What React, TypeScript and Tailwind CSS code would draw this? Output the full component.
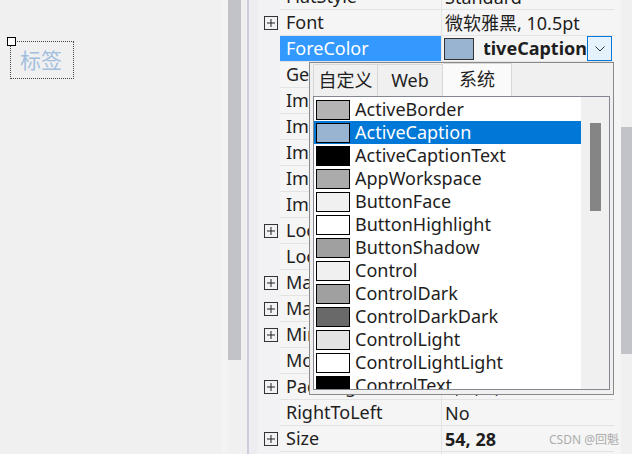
import React from "react";

type Row = { name: string; value?: string; plus?: boolean; selected?: boolean; bold?: boolean };

const rows: Row[] = [
  { name: "FlatStyle", value: "Standard" },
  { name: "Font", value: "微软雅黑, 10.5pt", plus: true },
  { name: "ForeColor", selected: true },
  { name: "GenerateMember", value: "True" },
  { name: "Image", value: "(无)" },
  { name: "ImageAlign", value: "MiddleCenter" },
  { name: "ImageIndex", value: "(无)" },
  { name: "ImageKey", value: "(无)" },
  { name: "ImageList", value: "(无)" },
  { name: "Location", value: "10, 41", plus: true },
  { name: "Locked", value: "False" },
  { name: "Margin", value: "3, 0, 3, 0", plus: true },
  { name: "MaximumSize", value: "0, 0", plus: true },
  { name: "MinimumSize", value: "0, 0", plus: true },
  { name: "Modifiers", value: "Private" },
  { name: "Padding", value: "0, 0, 0, 0", plus: true },
  { name: "RightToLeft", value: "No" },
  { name: "Size", value: "54, 28", plus: true, bold: true },
  { name: "TabIndex", value: "0" },
];

const colors: { name: string; color: string; selected?: boolean }[] = [
  { name: "ActiveBorder", color: "#b4b4b4" },
  { name: "ActiveCaption", color: "#99b4d1", selected: true },
  { name: "ActiveCaptionText", color: "#000000" },
  { name: "AppWorkspace", color: "#ababab" },
  { name: "ButtonFace", color: "#f0f0f0" },
  { name: "ButtonHighlight", color: "#ffffff" },
  { name: "ButtonShadow", color: "#a0a0a0" },
  { name: "Control", color: "#f0f0f0" },
  { name: "ControlDark", color: "#a0a0a0" },
  { name: "ControlDarkDark", color: "#696969" },
  { name: "ControlLight", color: "#e3e3e3" },
  { name: "ControlLightLight", color: "#ffffff" },
  { name: "ControlText", color: "#000000" },
];

function PlusBox() {
  return (
    <svg width="14" height="14" viewBox="0 0 14 14" className="block">
      <rect x="0.5" y="0.5" width="13" height="13" fill="none" stroke="#333" strokeWidth="1" />
      <path d="M3 7H11M7 3V11" stroke="#222" strokeWidth="1" />
    </svg>
  );
}

function Chevron() {
  return (
    <svg width="10" height="6" viewBox="0 0 10 6" className="block">
      <path d="M0.5 0.5L5 5L9.5 0.5" fill="none" stroke="#333" strokeWidth="1" />
    </svg>
  );
}

export default function App() {
  const font = { fontFamily: '"Noto Sans", "Noto Sans CJK SC", sans-serif' };
  return (
    <div
      className="flex w-[632px] h-[454px] overflow-hidden bg-[#f0f0f0] text-[18px] text-[#1e1e1e]"
      style={font}
    >
      {/* designer surface */}
      <div className="relative w-[221px] h-full bg-[#f0f0f0] shrink-0">
        <div className="absolute left-[10px] top-[41px] w-[64px] h-[38px] border border-dotted border-[#444] flex items-center pl-[9px]">
          <span className="text-[21px] leading-none text-[#a3bfdf]">标签</span>
        </div>
        <div className="absolute left-[7px] top-[37px] w-[9px] h-[9px] bg-white border border-black" />
      </div>
      <div className="w-[7px] h-full bg-[#f3f3f3] shrink-0" />
      {/* designer scrollbar */}
      <div className="w-[13px] h-full shrink-0 flex flex-col bg-[#f0f0f0]">
        <div className="h-[360px] bg-[#c2c3c9]" />
      </div>
      <div className="w-[6px] h-full bg-[#f0f0f0] shrink-0" />
      <div className="w-[2px] h-full bg-[#cdcedb] shrink-0" />
      <div className="w-[9px] h-full bg-[#eeeef2] shrink-0" />

      {/* property grid */}
      <div className="relative flex flex-1 h-full bg-[#f5f5f5]">
        <div className="w-[356px] h-full overflow-hidden shrink-0">
          <div className="flex flex-col mt-[-16px]">
            {rows.map((r) => (
              <div key={r.name} className="flex h-[26px] shrink-0">
                <div className="w-[22px] h-[26px] flex items-center pl-[6px] bg-[#f2f2f5]">
                  {r.plus && <PlusBox />}
                </div>
                <div
                  className={
                    "w-[162px] h-[26px] border-r border-b border-[#e3e3e3] pl-[6px] leading-[25px] whitespace-nowrap overflow-hidden " +
                    (r.selected ? "bg-[#3399ff] text-white" : "")
                  }
                >
                  {r.name}
                </div>
                <div className="flex-1 h-[26px] border-b border-[#e3e3e3] whitespace-nowrap overflow-hidden">
                  {r.selected ? (
                    <div className="flex h-[25px] items-center">
                      <div className="ml-[2px] w-[30px] h-[22px] bg-[#99b4d1] border border-[#333] shrink-0" />
                      <div className="ml-[10px] w-[103px] h-[25px] overflow-hidden flex justify-end shrink-0">
                        <span className="font-bold leading-[25px] whitespace-nowrap">ActiveCaption</span>
                      </div>
                      <div className="w-[25px] h-[25px] bg-[#e5f1fb] border border-[#0078d7] flex items-center justify-center shrink-0">
                        <Chevron />
                      </div>
                    </div>
                  ) : (
                    <span className={"pl-[3px] leading-[25px] " + (r.bold ? "font-bold" : "")}>{r.value}</span>
                  )}
                </div>
              </div>
            ))}
          </div>
        </div>
        <div className="w-[7px] h-full bg-[#f5f5f5] shrink-0" />
        <div className="w-[11px] h-full flex flex-col bg-[#f0f0f0] shrink-0">
          <div className="h-[127px]" />
          <div className="h-[227px] bg-[#c2c3c9]" />
        </div>

        {/* color dropdown */}
        <div className="absolute left-[51px] top-[62px] w-[305px] h-[333px] bg-[#f0f0f0] border border-[#8a8a8a] flex flex-col">
          <div className="flex h-[33px] pl-[3px] items-end shrink-0">
            <div className="w-[65px] h-[32px] bg-[#f0f0f0] border border-b-0 border-[#d9d9d9] flex items-center justify-center text-[18px]">
              自定义
            </div>
            <div className="w-[65px] h-[32px] bg-[#f0f0f0] border-t border-r border-[#d9d9d9] flex items-center justify-center text-[18px]">
              Web
            </div>
            <div className="w-[69px] h-[33px] bg-[#fafafa] border-t border-r border-[#d9d9d9] flex items-center justify-center text-[18px] pb-[2px]">
              系统
            </div>
          </div>
          <div className="mx-[3px] mb-[4px] flex-1 border border-[#828790] bg-white flex overflow-hidden">
            <div className="w-[267px] flex flex-col pt-[1px] shrink-0">
              {colors.map((c) => (
                <div
                  key={c.name}
                  className={
                    "flex items-center h-[23px] shrink-0 " + (c.selected ? "bg-[#0078d7] text-white" : "")
                  }
                >
                  <div
                    className="ml-[2px] w-[34px] h-[20px] border border-black shrink-0"
                    style={{ backgroundColor: c.color }}
                  />
                  <span className="ml-[5px] leading-[23px] whitespace-nowrap">{c.name}</span>
                </div>
              ))}
            </div>
            <div className="flex-1 bg-[#f0f0f0] flex flex-col items-center">
              <div className="mt-[26px] w-[11px] h-[88px] bg-[#858585]" />
            </div>
          </div>
        </div>

        <div className="absolute left-[291px] top-[431px] text-[12px] text-[#adadad] whitespace-nowrap">
          CSDN @回魁
        </div>
      </div>
    </div>
  );
}
